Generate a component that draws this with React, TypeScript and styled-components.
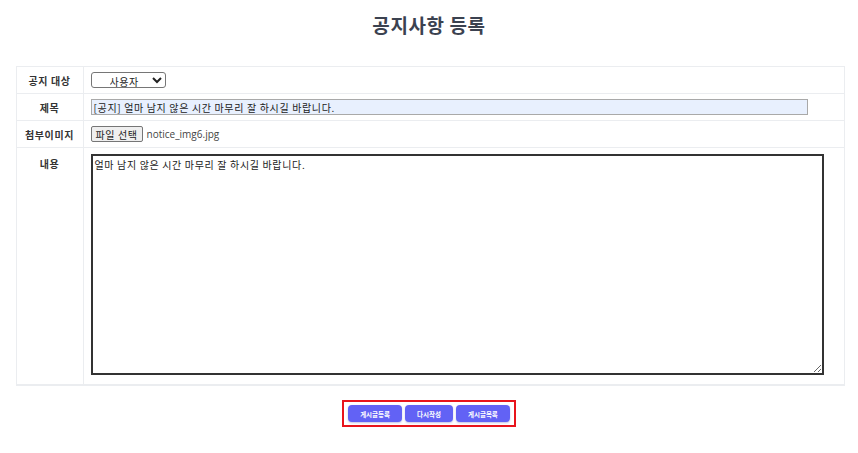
import * as React from "react";
import styled, { createGlobalStyle } from "styled-components";

const GlobalStyle = createGlobalStyle`
    html, body {
        margin: 0;
        padding: 0;
        background: #ffffff;
    }
    body {
        font-family: "Noto Sans CJK KR", "Noto Sans", sans-serif;
        color: #333;
    }
`;

const Page = styled.div`
    width: 858px;
    height: 453px;
    display: flex;
    flex-direction: column;
    align-items: center;
`;

const Title = styled.h2`
    margin: 13px 0 0;
    height: 53px;
    font-size: 19px;
    font-weight: 700;
    line-height: 24px;
    color: #3b4250;
    letter-spacing: 0.6px;
`;

const Form = styled.div`
    width: 829px;
    margin-left: 2px;
    display: grid;
    grid-template-columns: 67px 1fr;
    grid-template-rows: 27px 27px 27px 237px;
    border: 1px solid #ebedf0;
    box-sizing: border-box;
`;

const Label = styled.div<{ $top?: boolean }>`
    display: flex;
    justify-content: center;
    align-items: ${(p) => (p.$top ? "flex-start" : "center")};
    padding-top: ${(p) => (p.$top ? "8px" : "0")};
    font-size: 10px;
    font-weight: 700;
    letter-spacing: 0.6px;
    color: #333;
    border-right: 1px solid #ebedf0;
    border-bottom: 1px solid #ebedf0;
    box-sizing: border-box;
`;

const Field = styled.div<{ $top?: boolean }>`
    display: flex;
    align-items: ${(p) => (p.$top ? "flex-start" : "center")};
    gap: 4px;
    padding: ${(p) => (p.$top ? "6px 0 0 7px" : "0 0 0 7px")};
    border-bottom: 1px solid #ebedf0;
    box-sizing: border-box;
`;

const Select = styled.select`
    width: 75px;
    height: 16px;
    padding: 0 4px 0 14px;
    font-family: inherit;
    font-size: 10px;
    letter-spacing: 0.6px;
    color: #222;
    background: #fff;
    border: 1px solid #767676;
    border-radius: 3px;
    box-sizing: border-box;
`;

const TextInput = styled.input`
    width: 717px;
    height: 16px;
    padding: 0 2px;
    font-family: inherit;
    font-size: 10px;
    letter-spacing: 0.65px;
    color: #222;
    background: #e8f0fe;
    border: 1px solid #a9a9a9;
    box-sizing: border-box;
    outline: none;
`;

const FileButton = styled.button`
    height: 16px;
    padding: 0 4px;
    font-family: inherit;
    font-size: 10px;
    letter-spacing: 0.6px;
    color: #222;
    background: #efefef;
    border: 1px solid #767676;
    border-radius: 2px;
`;

const FileName = styled.span`
    font-family: "Open Sans", "Noto Sans", sans-serif;
    font-size: 10px;
    color: #444;
`;

const TextArea = styled.textarea`
    width: 733px;
    height: 221px;
    padding: 1px 2px;
    font-family: inherit;
    font-size: 10px;
    letter-spacing: 0.65px;
    color: #222;
    border: 2px solid #333;
    box-sizing: border-box;
    resize: both;
    outline: none;
`;

const ButtonBar = styled.div`
    margin-top: 14px;
    display: flex;
    gap: 3px;
    padding: 3px 4px;
    border: 2px solid #e8141c;
`;

const ActionButton = styled.button`
    height: 17px;
    padding: 0 12px;
    font-family: inherit;
    font-size: 6.5px;
    font-weight: 700;
    color: #fff;
    background: #6262f5;
    border: none;
    border-radius: 4px;
    box-shadow: 0 1px 2px rgba(80, 80, 180, 0.35);
`;

export default function App() {
    const message = "얼마 남지 않은 시간 마무리 잘 하시길 바랍니다.";
    return (
        <Page>
            <GlobalStyle />
            <Title>공지사항 등록</Title>
            <Form>
                <Label>공지 대상</Label>
                <Field>
                    <Select defaultValue="user">
                        <option value="user">사용자</option>
                        <option value="all">전체</option>
                    </Select>
                </Field>
                <Label>제목</Label>
                <Field>
                    <TextInput defaultValue={`[공지] ${message}`} />
                </Field>
                <Label>첨부이미지</Label>
                <Field>
                    <FileButton>파일 선택</FileButton>
                    <FileName>notice_img6.jpg</FileName>
                </Field>
                <Label $top>내용</Label>
                <Field $top>
                    <TextArea defaultValue={message} />
                </Field>
            </Form>
            <ButtonBar>
                <ActionButton>게시글등록</ActionButton>
                <ActionButton>다시작성</ActionButton>
                <ActionButton>게시글목록</ActionButton>
            </ButtonBar>
        </Page>
    );
}
